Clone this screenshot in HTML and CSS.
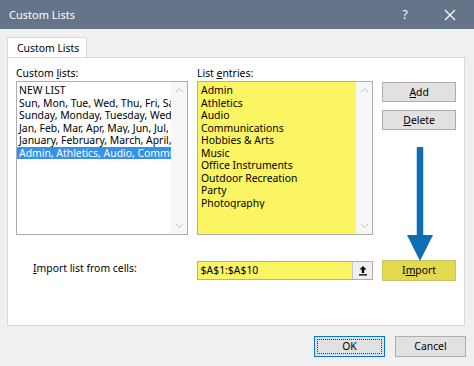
FILE: index.html
```html
<!DOCTYPE html>
<html lang="en">
<head>
    <meta charset="UTF-8">
    <title>Custom Lists</title>
    <link rel="stylesheet" href="styles.css">
</head>
<body>
    <div class="dialog">
        <div class="titlebar">
            <span class="title">Custom Lists</span>
            <span class="help">?</span>
            <svg class="close" width="12" height="12" viewBox="0 0 12 12">
                <path d="M1 1L11 11M11 1L1 11" stroke="#fff" stroke-width="1.2" fill="none"/>
            </svg>
        </div>
        <div class="body">
            <div class="tabs">
                <div class="tab">Custom Lists</div>
            </div>
            <div class="panel">
                <div class="lists">
                    <div class="col-left">
                        <div class="label">Custom <u>l</u>ists:</div>
                        <div class="listbox">
                            <div class="items">
                                <div class="item">NEW LIST</div>
                                <div class="item">Sun, Mon, Tue, Wed, Thu, Fri, Sat</div>
                                <div class="item">Sunday, Monday, Tuesday, Wednesday, Thursday</div>
                                <div class="item">Jan, Feb, Mar, Apr, May, Jun, Jul, Aug</div>
                                <div class="item">January, February, March, April, May</div>
                                <div class="item selected">Admin, Athletics, Audio, Communications</div>
                            </div>
                            <div class="scroll">
                                <svg width="9" height="6" viewBox="0 0 9 6"><path d="M1 5L4.5 1.5L8 5" stroke="#c4c4c4" fill="none"/></svg>
                                <svg width="9" height="6" viewBox="0 0 9 6"><path d="M1 1L4.5 4.5L8 1" stroke="#c4c4c4" fill="none"/></svg>
                            </div>
                        </div>
                    </div>
                    <div class="col-mid">
                        <div class="label">List <u>e</u>ntries:</div>
                        <div class="listbox">
                            <div class="items entries">
                                <div class="item">Admin</div>
                                <div class="item">Athletics</div>
                                <div class="item">Audio</div>
                                <div class="item">Communications</div>
                                <div class="item">Hobbies &amp; Arts</div>
                                <div class="item">Music</div>
                                <div class="item">Office Instruments</div>
                                <div class="item">Outdoor Recreation</div>
                                <div class="item">Party</div>
                                <div class="item">Photography</div>
                            </div>
                            <div class="scroll">
                                <svg width="9" height="6" viewBox="0 0 9 6"><path d="M1 5L4.5 1.5L8 5" stroke="#c4c4c4" fill="none"/></svg>
                                <svg width="9" height="6" viewBox="0 0 9 6"><path d="M1 1L4.5 4.5L8 1" stroke="#c4c4c4" fill="none"/></svg>
                            </div>
                        </div>
                    </div>
                    <div class="col-btns">
                        <div class="btn"><u>A</u>dd</div>
                        <div class="btn delete"><u>D</u>elete</div>
                    </div>
                </div>
                <div class="import-row">
                    <div class="import-label"><u>I</u>mport list from cells:</div>
                    <div class="range">
                        <span class="range-text">$A$1:$A$10</span>
                        <span class="collapse">
                            <svg width="10" height="11" viewBox="0 0 10 11">
                                <path d="M5 1L1.5 4.5H3.8V8H6.2V4.5H8.5Z" fill="#000"/>
                                <rect x="1" y="9.2" width="8" height="1.3" fill="#000"/>
                            </svg>
                        </span>
                    </div>
                    <div class="btn import">I<u>m</u>port</div>
                </div>
                <svg class="arrow" width="26" height="114" viewBox="0 0 26 114">
                    <path d="M13 1.5V90" stroke="#0d6fb3" stroke-width="6.5" stroke-linecap="round" fill="none"/>
                    <path d="M0 88H26L13 114Z" fill="#0d6fb3"/>
                </svg>
            </div>
            <div class="footer">
                <div class="btn ok"><span class="focus">OK</span></div>
                <div class="btn">Cancel</div>
            </div>
        </div>
    </div>
</body>
</html>
```

FILE: styles.css
```css
body {
    margin: 0;
    background-color: #f0f0f0;
    font-family: "Noto Sans", "Open Sans", sans-serif;
    font-size: 10.4px;
    color: #000;
}
.dialog {
    width: 474px;
    height: 366px;
    overflow: hidden;
}
.titlebar {
    height: 29px;
    background-color: #657488;
    color: #fff;
    display: flex;
    align-items: center;
    padding-left: 9px;
    font-size: 11px;
}
.title {
    flex: 1;
}
.help {
    width: 20px;
    text-align: center;
    margin-right: 29px;
    font-size: 12px;
}
.close {
    margin-right: 18px;
}
.body {
    padding: 8px 0 0 7px;
}
.tabs {
    display: flex;
    height: 20px;
}
.tab {
    width: 80px;
    box-sizing: border-box;
    border: 1px solid #d9d9d9;
    border-bottom: none;
    background-color: #fff;
    padding-left: 9px;
    line-height: 20px;
    margin-bottom: -1px;
    position: relative;
}
.panel {
    width: 458px;
    height: 269px;
    box-sizing: border-box;
    border: 1px solid #d9d9d9;
    background-color: #fff;
    padding: 8px 8px 0 8px;
    position: relative;
}
.lists {
    display: flex;
    gap: 9px;
}
.col-left {
    width: 172px;
}
.col-mid {
    width: 177px;
}
.col-btns {
    width: 74px;
    padding-top: 16px;
}
.label {
    height: 15px;
    line-height: 14px;
}
.listbox {
    height: 154px;
    box-sizing: border-box;
    border: 1px solid #adadad;
    display: flex;
}
.items {
    flex: 1;
    padding: 2px 0 0 0;
    overflow: hidden;
    white-space: nowrap;
    line-height: 12.5px;
}
.item {
    padding-left: 2px;
    overflow: hidden;
    height: 12.5px;
}
.item.selected {
    background-color: #3591ea;
    color: #fff;
}
.entries {
    background-color: #fbf463;
    padding-left: 1px;
}
.scroll {
    width: 16px;
    background-color: #f7f7f7;
    display: flex;
    flex-direction: column;
    justify-content: space-between;
    align-items: center;
    padding: 5px 0;
    box-sizing: border-box;
}
.btn {
    height: 20px;
    box-sizing: border-box;
    border: 1px solid #adadad;
    background-color: #e1e1e1;
    text-align: center;
    line-height: 18px;
}
.delete {
    margin-top: 8px;
}
.import-row {
    display: flex;
    align-items: center;
    gap: 9px;
    margin-top: 25px;
}
.import-label {
    width: 155px;
    padding-left: 17px;
    margin-bottom: 6px;
}
.range {
    width: 177px;
    height: 19px;
    box-sizing: border-box;
    border: 1px solid #adadad;
    background-color: #fbf463;
    display: flex;
}
.range-text {
    flex: 1;
    padding-left: 3px;
    line-height: 17px;
}
.collapse {
    width: 19px;
    background-color: #f0f0f0;
    border-left: 1px solid #c8c8c8;
    display: flex;
    align-items: center;
    justify-content: center;
}
.import {
    width: 74px;
    height: 21px;
    line-height: 19px;
    background-color: #e3d94c;
    border-color: #c9c26a;
}
.arrow {
    position: absolute;
    left: 399px;
    top: 89px;
}
.footer {
    width: 459px;
    display: flex;
    justify-content: flex-end;
    gap: 10px;
    margin-top: 10px;
}
.footer .btn {
    width: 71px;
    height: 21px;
    line-height: 19px;
}
.ok {
    border-color: #0078d7;
    padding: 2px;
}
.focus {
    display: block;
    height: 15px;
    line-height: 13px;
    border: 1px dotted #333;
    box-sizing: border-box;
}
```
